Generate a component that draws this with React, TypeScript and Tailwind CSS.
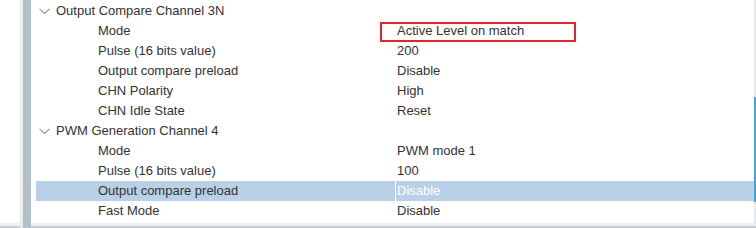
import { ReactNode } from "react"

type Row =
  | { kind: "group"; label: string }
  | { kind: "item"; label: string; value: string; selected?: boolean; marked?: boolean }

const rows: Row[] = [
  { kind: "group", label: "Output Compare Channel 3N" },
  { kind: "item", label: "Mode", value: "Active Level on match", marked: true },
  { kind: "item", label: "Pulse (16 bits value)", value: "200" },
  { kind: "item", label: "Output compare preload", value: "Disable" },
  { kind: "item", label: "CHN Polarity", value: "High" },
  { kind: "item", label: "CHN Idle State", value: "Reset" },
  { kind: "group", label: "PWM Generation Channel 4" },
  { kind: "item", label: "Mode", value: "PWM mode 1" },
  { kind: "item", label: "Pulse (16 bits value)", value: "100" },
  { kind: "item", label: "Output compare preload", value: "Disable", selected: true },
  { kind: "item", label: "Fast Mode", value: "Disable" },
]

function Chevron() {
  return (
    <svg width="11" height="7" viewBox="0 0 11 7" className="ml-[3px] shrink-0">
      <polyline points="0.5,0.8 5.5,5.5 10.5,0.8" fill="none" stroke="#8f9295" strokeWidth="1.1" />
    </svg>
  )
}

function ValueCell({ children, selected, marked }: { children: ReactNode; selected?: boolean; marked?: boolean }) {
  return (
    <div
      className={
        "relative flex h-full flex-1 items-center border-l pl-[1px] " +
        (selected ? "border-white text-white" : "border-transparent")
      }
    >
      {children}
      {marked && (
        <div className="pointer-events-none absolute left-[-16px] top-[1px] h-[20px] w-[196px] border-2 border-[#e8212b]" />
      )}
    </div>
  )
}

export default function App() {
  return (
    <div
      className="flex h-[228px] w-[756px] overflow-hidden bg-white text-[13px] text-[#333]"
      style={{ fontFamily: '"Liberation Sans", Arial, sans-serif' }}
    >
      <div className="flex w-[20px] flex-col">
        <div className="flex-1" />
        <div className="h-[3px] bg-[#eef0f2]" />
        <div className="h-[2px] bg-[#c9cdd1]" />
      </div>
      <div className="w-[3px] bg-[#e9ecee]" />
      <div className="w-[8px] bg-[#b5c1c9]" />

      <div className="flex flex-1 flex-col">
        <div className="flex flex-1">
          <div className="flex-1 pl-[5px] pt-[1px]">
            {rows.map((row, i) =>
              row.kind === "group" ? (
                <div key={i} className="flex h-[20px] items-center">
                  <Chevron />
                  <span className="ml-[6px]">{row.label}</span>
                </div>
              ) : (
                <div
                  key={i}
                  className={"flex h-[20px] items-center " + (row.selected ? "bg-[#b9d0e6]" : "")}
                >
                  <div className="w-[359px] shrink-0 pl-[62px]">{row.label}</div>
                  <ValueCell selected={row.selected} marked={row.marked}>
                    {row.value}
                  </ValueCell>
                </div>
              )
            )}
          </div>
          <div className="relative w-[2px] bg-[#e4ebef]">
            <div className="absolute right-0 top-[97px] h-[105px] w-[2px] bg-[#46a2cf]" />
          </div>
        </div>
        <div className="h-[3px] bg-[#eef0f2]" />
        <div className="h-[2px] bg-[#c9cdd1]" />
      </div>
    </div>
  )
}
